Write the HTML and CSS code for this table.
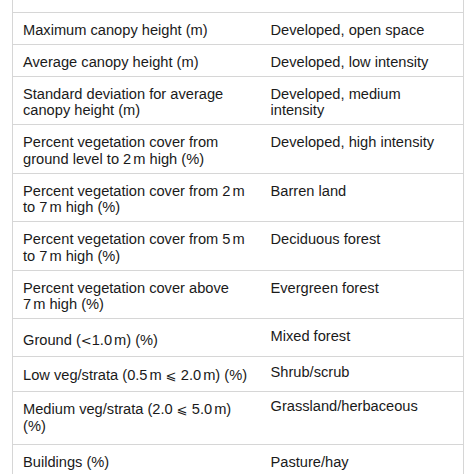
FILE: index.html
```html
<!DOCTYPE html>
<html>
<head>
<meta charset="utf-8">
<link rel="stylesheet" href="styles.css">
</head>
<body>
<div class="frame">
<table class="vars">
<colgroup><col class="c1"><col class="c2"></colgroup>
<tbody>
<tr class="r-first"><td>Distance to nearest building within urban buffer zone (m)</td><td></td></tr>
<tr><td>Maximum canopy height (m)</td><td>Developed, open space</td></tr>
<tr><td>Average canopy height (m)</td><td>Developed, low intensity</td></tr>
<tr><td>Standard deviation for average canopy height (m)</td><td>Developed, medium intensity</td></tr>
<tr><td>Percent vegetation cover from ground level to 2<span class="u">m</span> high (%)</td><td>Developed, high intensity</td></tr>
<tr><td>Percent vegetation cover from 2<span class="u">m</span> to 7<span class="u">m</span> high (%)</td><td>Barren land</td></tr>
<tr><td>Percent vegetation cover from 5<span class="u">m</span> to 7<span class="u">m</span> high (%)</td><td>Deciduous forest</td></tr>
<tr><td>Percent vegetation cover above 7<span class="u">m</span> high (%)</td><td>Evergreen forest</td></tr>
<tr class="r-ground"><td>Ground (<span class="sym">&lt;</span>1.0<span class="u">m</span>) (%)</td><td>Mixed forest</td></tr>
<tr class="r-low"><td>Low veg/strata (0.5<span class="u">m</span> <span class="sym">⩽</span> 2.0<span class="u">m</span>) (%)</td><td>Shrub/scrub</td></tr>
<tr class="r-med"><td>Medium veg/strata (2.0 <span class="sym">⩽</span> 5.0<span class="u">m</span>) (%)</td><td>Grassland/herbaceous</td></tr>
<tr><td>Buildings (%)</td><td>Pasture/hay</td></tr>
</tbody>
</table>
</div>
</body>
</html>
```
FILE: styles.css
```css
html, body {
  margin: 0;
  padding: 0;
  background: #ffffff;
}
.frame {
  width: 474px;
  height: 474px;
  overflow: hidden;
}
.vars {
  margin: -42.4px 0 0 12px;
  width: 451px;
  table-layout: fixed;
  border-collapse: collapse;
  font-family: "Liberation Sans", Arial, sans-serif;
  font-size: 14.65px;
  line-height: 16.4px;
  color: #1a1a1a;
}
.c1 { width: 247px; }
.c2 { width: 204px; }
.vars td {
  vertical-align: top;
  border-top: 1px solid #d6d6d6;
  border-bottom: 1px solid #d6d6d6;
  padding: 9px 10px 5.6px 10px;
}
.vars td:first-child {
  border-left: 1.5px solid #d6d6d6;
  padding-right: 8px;
}
.vars td:last-child {
  border-right: 1.5px solid #d6d6d6;
  padding-left: 11px;
}
.u { margin-left: 2px; }
.sym {
  font-family: "DejaVu Sans", sans-serif;
  font-size: 13px;
}
.r-first td { padding-bottom: 11.6px; }
.r-ground td:first-child { padding-top: 13px; padding-bottom: 7px; }
.r-low td:first-child { padding-top: 10px; padding-bottom: 6px; }
.r-low td:last-child { padding-top: 7px; }
.r-med td:first-child { padding-top: 9px; padding-bottom: 9px; }
.r-med td:last-child { padding-top: 6px; }
```
